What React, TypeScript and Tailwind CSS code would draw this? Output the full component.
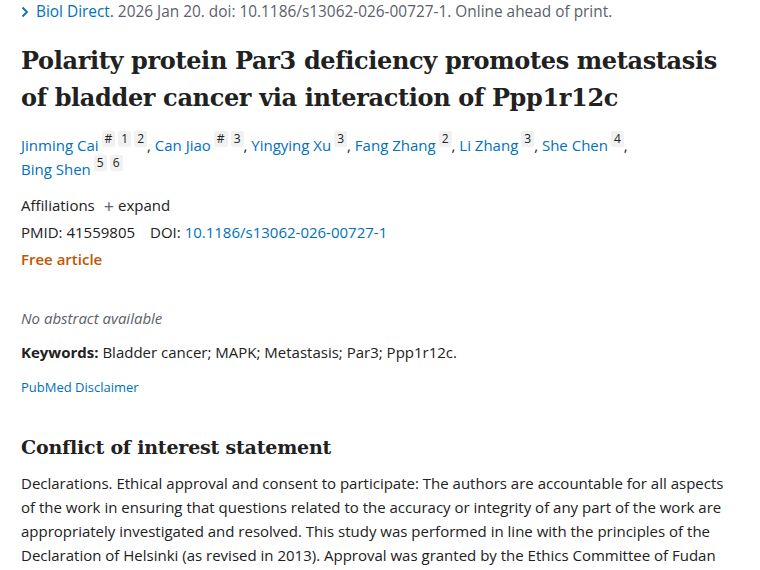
import React from 'react';

const Sup = ({ children }: { children: React.ReactNode }) => (
  <span className="ml-[3px] inline-block rounded-[2px] bg-[#f1f1f1] px-[3px] align-top text-[12px] leading-[16px] text-[#212121] -mt-[2px]">
    {children}
  </span>
);

const authors: { name: string; sups: string[]; last?: boolean }[] = [
  { name: 'Jinming Cai', sups: ['#', '1', '2'] },
  { name: 'Can Jiao', sups: ['#', '3'] },
  { name: 'Yingying Xu', sups: ['3'] },
  { name: 'Fang Zhang', sups: ['2'] },
  { name: 'Li Zhang', sups: ['3'] },
  { name: 'She Chen', sups: ['4'] },
  { name: 'Bing Shen', sups: ['5', '6'], last: true },
];

const App: React.FC = () => {
  return (
    <div className="min-h-screen bg-white px-[21px] text-[#212121] [font-family:'Open_Sans',sans-serif]">
      {/* Citation */}
      <div className="flex items-center pt-[2px] text-[15.4px] leading-[20px] text-[#5b616b]">
        <svg width="10" height="12" viewBox="0 0 10 12" className="mr-[6px] ml-[-1px]">
          <path d="M2.5 1.5 L7 6 L2.5 10.5" stroke="#0071bc" strokeWidth="1.8" fill="none" />
        </svg>
        <span className="text-[#0071bc]">Biol Direct.</span>
        <span>&nbsp;2026 Jan 20. doi: 10.1186/s13062-026-00727-1. Online ahead of print.</span>
      </div>

      {/* Title */}
      <h1 className="mr-[-10px] mt-[20px] text-[24px] font-bold leading-[37px] tracking-[-0.35px] text-[#212121] [font-family:'DejaVu_Serif',serif]">
        Polarity protein Par3 deficiency promotes metastasis of bladder cancer via interaction of Ppp1r12c
      </h1>

      {/* Authors */}
      <div className="mt-[17px] max-w-[700px] text-[15px] leading-[24px]">
        {authors.map((a) => (
          <React.Fragment key={a.name}>
            <span className="whitespace-nowrap">
              <span className="text-[#0071bc]">{a.name}</span>
              {a.sups.map((s, i) => (
                <Sup key={i}>{s}</Sup>
              ))}
              {!a.last && <span>, </span>}
            </span>{' '}
          </React.Fragment>
        ))}
      </div>

      {/* Affiliations / ids */}
      <div className="mt-[11px] text-[15px] leading-[27px]">
        <div className="flex items-center">
          Affiliations
          <span className="ml-[9px] mr-[4px] text-[18px] leading-none text-[#5b616b]">+</span>
          expand
        </div>
        <div>
          PMID: 41559805<span className="ml-[15px]">DOI: </span>
          <span className="text-[#0071bc]">10.1186/s13062-026-00727-1</span>
        </div>
        <div className="font-semibold text-[#c05600]">Free article</div>
      </div>

      <p className="mt-[33px] text-[15px] italic leading-[24px] text-[#5b616b]">No abstract available</p>

      <p className="mt-[10px] text-[15px] leading-[24px]">
        <span className="font-bold">Keywords:</span> Bladder cancer; MAPK; Metastasis; Par3; Ppp1r12c.
      </p>

      <p className="mt-[13px] text-[13px] leading-[20px] text-[#0071bc]">PubMed Disclaimer</p>

      <h2 className="mt-[36px] text-[19px] font-bold leading-[28px] tracking-[-0.2px] [font-family:'DejaVu_Serif',serif]">
        Conflict of interest statement
      </h2>

      <p className="mt-[10px] text-[15px] leading-[24px]">
        Declarations. Ethical approval and consent to participate: The authors are accountable for all aspects of
        the work in ensuring that questions related to the accuracy or integrity of any part of the work are
        appropriately investigated and resolved. This study was performed in line with the principles of the
        Declaration of Helsinki (as revised in 2013). Approval was granted by the Ethics Committee of Fudan
        University.
      </p>
    </div>
  );
};

export default App;
